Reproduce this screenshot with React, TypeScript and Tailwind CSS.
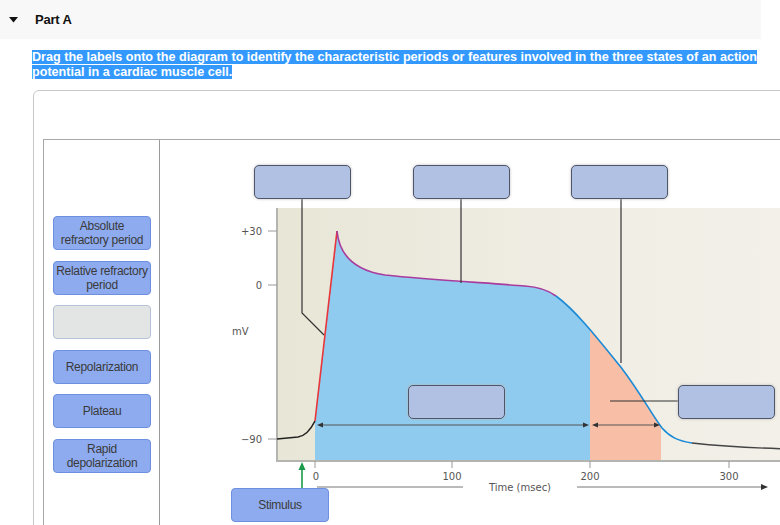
const LABELS = [
  "Absolute\nrefractory period",
  "Relative refractory period",
  "",
  "Repolarization",
  "Plateau",
  "Rapid depolarization",
]

// drop targets sitting on the chart, page coords
const TARGETS = [
  { x: 254, y: 165 },
  { x: 413, y: 165 },
  { x: 571, y: 165 },
  { x: 408, y: 385 },
  { x: 678, y: 385 },
]

const OX = 160
const OY = 140

const CURVE =
  "M315,421 L337,231 C339,252 352,270 385,275 C430,280 490,283 525,286 C540,287 548,290 556,296 C575,310 595,335 620,366 C640,392 652,415 662,428 C670,437 678,441 692,443 C720,446 750,448 790,449"

const Label = ({ text }: { text: string }) =>
  text ? (
    <div className="w-[98px] h-[34px] flex items-center justify-center text-center whitespace-pre-line rounded-[4px] bg-[#8eabef] border border-[#6e8fe0] text-[#3a3a3a] text-[12px] leading-[14px] tracking-[-0.3px]">
      {text}
    </div>
  ) : (
    <div className="w-[98px] h-[34px] rounded-[4px] bg-[#e3e4e4] border border-[#b5c3da]" />
  )

const Chart = () => (
  <svg width="640" height="400" className="absolute left-0 top-0">
    <defs>
      <linearGradient id="bg" x1="0" x2="1" y1="0" y2="0">
        <stop offset="0" stopColor="#e8e6d6" />
        <stop offset="0.5" stopColor="#efede3" />
        <stop offset="1" stopColor="#f2f0e8" />
      </linearGradient>
      <clipPath id="blue">
        <rect x="315" y="200" width="275" height="261" />
      </clipPath>
      <clipPath id="peach">
        <rect x="590" y="200" width="71" height="261" />
      </clipPath>
    </defs>
    <g transform={`translate(${-OX},${-OY})`}>
      <rect x="277" y="208" width="520" height="253" fill="url(#bg)" />
      <path d={`${CURVE} L790,461 L315,461 Z`} fill="#8fcbef" clipPath="url(#blue)" />
      <path d={`${CURVE} L790,461 L315,461 Z`} fill="#f9bfa6" clipPath="url(#peach)" />

      {/* axes */}
      <path d="M277,208 L277,461 L790,461" fill="none" stroke="#b4b4b0" strokeWidth="2" />
      <g stroke="#999" strokeWidth="1">
        <line x1="268" y1="231" x2="277" y2="231" />
        <line x1="268" y1="285" x2="277" y2="285" />
        <line x1="268" y1="439" x2="277" y2="439" />
        <line x1="315" y1="461" x2="315" y2="468" />
        <line x1="452" y1="461" x2="452" y2="468" />
        <line x1="590" y1="461" x2="590" y2="468" />
        <line x1="729" y1="461" x2="729" y2="468" />
      </g>
      <g fill="#555" fontSize="10" fontFamily="'DejaVu Sans', Verdana, sans-serif">
        <text x="262" y="235" textAnchor="end">+30</text>
        <text x="262" y="289" textAnchor="end">0</text>
        <text x="262" y="443" textAnchor="end">−90</text>
        <text x="232" y="335">mV</text>
        <text x="316" y="480" textAnchor="middle">0</text>
        <text x="452" y="480" textAnchor="middle">100</text>
        <text x="590" y="480" textAnchor="middle">200</text>
        <text x="729" y="480" textAnchor="middle">300</text>
        <text x="520" y="491" textAnchor="middle">Time (msec)</text>
      </g>
      <g stroke="#777" strokeWidth="1">
        <line x1="317" y1="487" x2="463" y2="487" />
        <line x1="577" y1="487" x2="761" y2="487" />
      </g>
      <path d="M761,484 L768,487 L761,490 Z" fill="#333" />

      {/* curve */}
      <path d="M277,439 L298,437 C305,436 310,431 315,421" fill="none" stroke="#222" strokeWidth="1.6" />
      <path d="M315,421 L337,231" fill="none" stroke="#e8343a" strokeWidth="1.6" />
      <path
        d="M337,231 C339,252 352,270 385,275 C430,280 490,283 525,286 C540,287 548,290 556,296"
        fill="none"
        stroke="#a83c9e"
        strokeWidth="1.6"
      />
      <path
        d="M556,296 C575,310 595,335 620,366 C640,392 652,415 662,428 C670,437 678,441 692,443"
        fill="none"
        stroke="#1a8ad6"
        strokeWidth="1.6"
      />
      <path d="M692,443 C720,446 750,448 790,449" fill="none" stroke="#444" strokeWidth="1.4" />

      {/* period arrows */}
      <g stroke="#555" strokeWidth="1">
        <line x1="320" y1="425" x2="586" y2="425" />
        <line x1="595" y1="425" x2="657" y2="425" />
      </g>
      <g fill="#333">
        <path d="M317,425 L323,422.5 L323,427.5 Z" />
        <path d="M589,425 L583,422.5 L583,427.5 Z" />
        <path d="M592,425 L598,422.5 L598,427.5 Z" />
        <path d="M660,425 L654,422.5 L654,427.5 Z" />
      </g>

      {/* leader lines */}
      <g fill="none" stroke="#333" strokeWidth="1.2">
        <path d="M302,199 L302,313 L324,335" />
        <path d="M461,199 L461,283" />
        <path d="M621,199 L621,363" />
        <path d="M610,401 L678,401" />
      </g>

      {/* stimulus arrow */}
      <line x1="302" y1="488" x2="302" y2="469" stroke="#1b9a4c" strokeWidth="1.6" />
      <path d="M302,462 L298.5,470 L305.5,470 Z" fill="#1b9a4c" />
    </g>
  </svg>
)

export default function App() {
  return (
    <div className="w-[780px] h-[525px] overflow-hidden bg-white font-['Liberation_Sans',Arial,sans-serif]">
      <div className="w-[761px] h-[39px] bg-[#f8f8f8] flex items-center">
        <svg width="9" height="6" className="ml-[9px] mr-[17px]">
          <path d="M0,0 L9,0 L4.5,5.5 Z" fill="#111" />
        </svg>
        <span className="text-[13px] font-bold text-[#111] tracking-[-0.2px]">Part A</span>
      </div>

      <p className="ml-[32px] mt-[11px] w-[735px] text-[12.6px] font-bold leading-[15px]">
        <span className="bg-[#3399ff] text-white">
          Drag the labels onto the diagram to identify the characteristic periods or features involved in the
          three states of an action potential in a cardiac muscle cell.
        </span>
      </p>

      <div className="ml-[33px] mt-[10px] w-[800px] h-[460px] border border-[#c8c8c8] rounded-[6px] pl-[9px] pt-[48px]">
        <div className="flex h-full border-t border-l border-[#a8a8a8]">
          <div className="w-[116px] shrink-0 border-r border-[#9a9a9a] pl-[9px] pt-[76px] flex flex-col gap-[10.5px]">
            {LABELS.map((t, i) => (
              <Label key={i} text={t} />
            ))}
          </div>

          <div className="relative flex-1">
            <Chart />
            {TARGETS.map((t, i) => (
              <div
                key={i}
                className="absolute w-[97px] h-[34px] rounded-[5px] bg-[#b0c1e3] border border-[#50566a] shadow-[0_0_3px_#bbb]"
                style={{ left: t.x - OX, top: t.y - OY }}
              />
            ))}
            <div className="absolute left-[71px] top-[348px]">
              <Label text="Stimulus" />
            </div>
          </div>
        </div>
      </div>
    </div>
  )
}
